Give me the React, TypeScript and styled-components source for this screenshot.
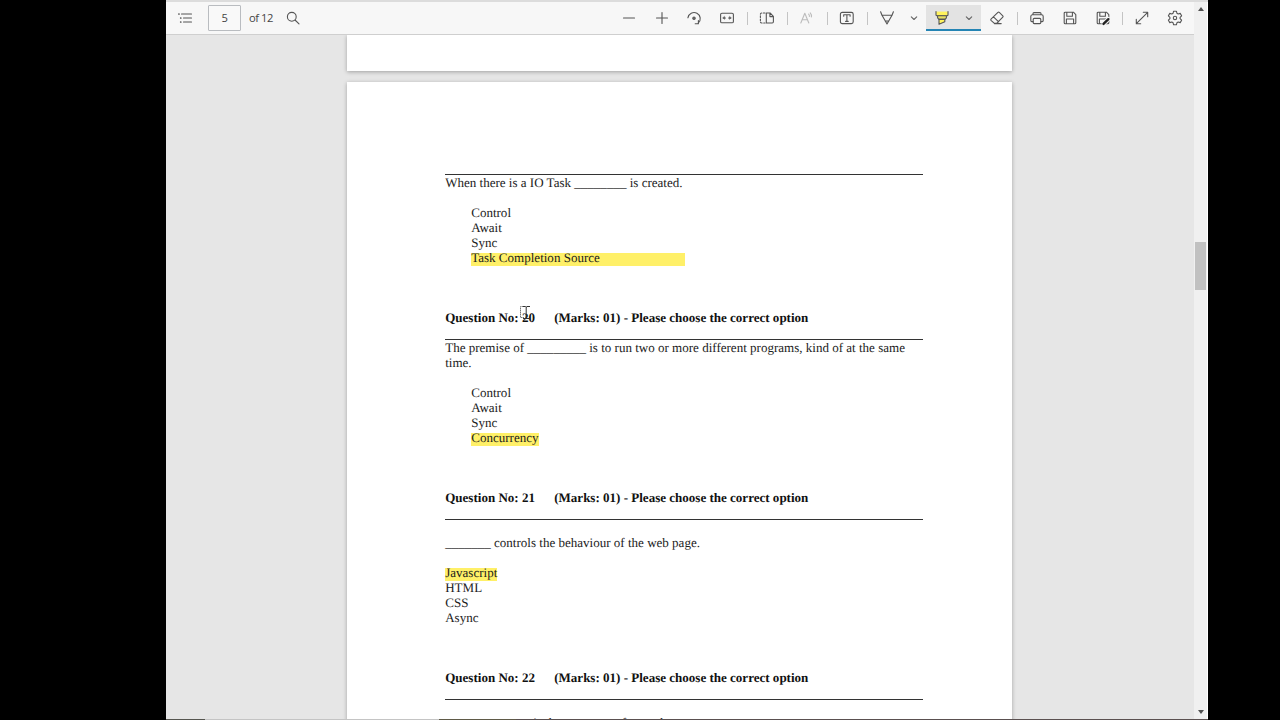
import React from 'react';
import styled, { createGlobalStyle } from 'styled-components';

const Global = createGlobalStyle`
  html, body { margin: 0; background: #000; }
  * { box-sizing: border-box; }
`;

const Screen = styled.div`
  width: 1280px;
  height: 720px;
  padding: 0 72px 0 166px;
  background: #000;
  overflow: hidden;
`;

const Viewer = styled.div`
  position: relative;
  display: flex;
  height: 720px;
  border-top: 2px solid #dcdcdc;
  background: #e6e6e6;
`;

const Main = styled.div`
  display: flex;
  flex-direction: column;
  width: 1028px;
`;

const Toolbar = styled.div`
  display: flex;
  align-items: center;
  flex: none;
  height: 33px;
  border-bottom: 1px solid #cfcfcf;
  background: #f7f7f7;
  font: 11.2px 'Open Sans', 'Noto Sans', sans-serif;
  letter-spacing: -0.6px;
  word-spacing: 0.5px;
  color: #444;
`;

const Slot = styled.div<{ $w: number }>`
  display: flex;
  align-items: center;
  justify-content: center;
  flex: none;
  width: ${(p) => p.$w}px;
  height: 26px;
`;

const PageInput = styled.div`
  display: flex;
  align-items: center;
  justify-content: center;
  width: 33px;
  height: 26px;
  margin-left: 4px;
  padding-bottom: 1px;
  border: 1px solid #b9bcc0;
  border-radius: 1px;
  background: #f9f9f9;
`;

const PageCount = styled.div`
  width: 28px;
  margin-left: 8px;
  padding-bottom: 1px;
  white-space: nowrap;
`;

const Tools = styled.div`
  display: flex;
  align-items: center;
  margin: 0 3px 0 auto;
`;

const Separator = styled.div`
  width: 1px;
  height: 13px;
  margin: 0 2px 0 3px;
  background: #c4c4c4;
`;

const ActiveTool = styled.div`
  display: flex;
  width: 55px;
  height: 26px;
  margin-left: 1px;
  margin-right: -1px;
  background: #e3e3e3;
  box-shadow: inset 0 -2px #2484b4;
`;

const Glyph = styled.svg`
  display: block;
  width: 16px;
  height: 16px;
  fill: none;
  stroke: #555;
  stroke-width: 1.1;
  stroke-linecap: round;
  stroke-linejoin: round;
  overflow: visible;
`;

const Canvas = styled.div`
  flex: 1;
  min-height: 0;
  padding-left: 181px;
  overflow: hidden;
`;

const Sheet = styled.div`
  width: 665px;
  background: #fff;
  box-shadow: 0 1px 4px rgba(0, 0, 0, 0.3);
`;

const PreviousSheet = styled(Sheet)`
  height: 36px;
  margin-bottom: 11px;
`;

const CurrentSheet = styled(Sheet)`
  height: 800px;
  padding: 78px 0 0 98.2px;
  font: 13.04px/15px 'Liberation Serif', 'Times New Roman', serif;
  color: #1c1c1c;
  text-rendering: geometricPrecision;
  white-space: pre;
`;

const Line = styled.div<{ $indent?: boolean }>`
  width: 478px;
  height: 15px;
  padding-left: ${(p) => (p.$indent ? 26 : 0)}px;
`;

const Heading = styled(Line)`
  display: flex;
  font-weight: bold;
  color: #111;
`;

const Number = styled.span`
  width: 109px;
`;

const Rule = styled.div`
  width: 478px;
  height: 15px;
  border-bottom: 1px solid #333;
`;

const Mark = styled.span<{ $w: number }>`
  display: block;
  width: ${(p) => p.$w}px;
  height: 16px;
  background: linear-gradient(transparent 3px, #fff068 3px);
`;

const Scrollbar = styled.div`
  display: flex;
  flex-direction: column;
  align-items: center;
  width: 14px;
  padding-top: 5px;
  border-right: 1px solid #fff;
  background: #f0f0f0;
`;

const Thumb = styled.div`
  width: 11px;
  height: 48px;
  margin: 231px 0 auto;
  background: #c1c1c1;
`;

const Arrow = styled.svg`
  width: 6px;
  height: 4px;
  fill: #505050;
`;

const ScreenEdge = styled.div`
  position: absolute;
  left: 0;
  right: 0;
  bottom: 0;
  height: 1px;
  background: linear-gradient(90deg, #55554f 39px, #c4c4c4 39px 273px, #5f5a48 273px 350px, #5a5050 350px);
`;

const Pointer = styled.svg`
  position: absolute;
  left: 353px;
  top: 303px;
  width: 12px;
  height: 15px;
  fill: none;
  stroke: #333;
  stroke-width: 1;
`;

const Icon = ({ children, color }: { children: React.ReactNode; color?: string }) => (
  <Glyph viewBox="0 0 16 16" style={color ? { stroke: color } : undefined}>{children}</Glyph>
);

const Chevron = () => (
  <Icon color="#666"><path d="M5.3 6.8 8 9.5l2.7-2.7" /></Icon>
);

const floppy = 'M2.2 3.2a1 1 0 0 1 1-1h8.2l2.4 2.4v8.2a1 1 0 0 1-1 1H3.2a1 1 0 0 1-1-1zM4.8 2.4v3.8h5.6V2.4M4.4 13.6V9h7.2v4.6';

const Options = ({ items }: { items: string[] }) => (
  <>{items.map((t) => <Line key={t} $indent>{t}</Line>)}</>
);

const Question = ({ n }: { n: number }) => (
  <>
    <Heading><Number>Question No: {n}</Number>(Marks: 01) - Please choose the correct option</Heading>
    <Rule />
  </>
);

export default function App() {
  return (
    <Screen>
      <Global />
      <Viewer>
        <Main>
          <Toolbar>
            <Slot $w={38}>
              <Icon>
                <path d="M4.5 4H14.5M6.5 8H14.5M6.5 12H14.5" />
                <path d="M1.9 4h.1M3.7 8h.1M3.7 12h.1" strokeWidth="1.7" />
              </Icon>
            </Slot>
            <PageInput>5</PageInput>
            <PageCount>of 12</PageCount>
            <Slot $w={32}><Icon><circle cx="6.8" cy="6.8" r="4.4" /><path d="m10 10 4 3.8" /></Icon></Slot>
            <Tools>
              <Slot $w={32}><Icon><path d="M2.5 8h11" /></Icon></Slot>
              <Slot $w={33}><Icon><path d="M2.5 8h11M8 2.5v11" /></Icon></Slot>
              <Slot $w={32}>
                <Icon>
                  <path d="M1.9 7.8A6.2 6.1 0 1 1 12.2 13.2M9.2 13.7h3.2v-3.2" />
                  <circle cx="8" cy="8.2" r="1.2" fill="#777" />
                </Icon>
              </Slot>
              <Slot $w={34}>
                <Icon>
                  <rect x="1.6" y="3.2" width="12.8" height="9.6" rx="1.4" />
                  <path d="M4.2 8h2.2M9.6 8h2.2" />
                  <path d="M5.6 6.6v2.8L4 8zM10.4 6.6v2.8L12 8z" fill="#555" strokeWidth=".4" />
                </Icon>
              </Slot>
              <Separator />
              <Slot $w={34}>
                <Icon>
                  <path d="M6 3H2.6a1.2 1.2 0 0 0-1.2 1.2v7.6A1.2 1.2 0 0 0 2.6 13H6" strokeDasharray="1.7 1.6" />
                  <path d="M7.3 3h3.8l3.3 3.3v5.5a1.2 1.2 0 0 1-1.2 1.2H7.3zM10.9 3.2v3.4h3.4" />
                </Icon>
              </Slot>
              <Separator />
              <Slot $w={34}>
                <Icon color="#bcbcbc">
                  <path d="M1.8 13 5.8 3.2 9.8 13M3.2 9.7h5.2M9.6 4.2c.7.6.9 1.5.8 2.3M11.2 2.8c1.1 1.1 1.5 2.6 1.2 4.2" />
                </Icon>
              </Slot>
              <Separator />
              <Slot $w={34}>
                <Icon>
                  <rect x="1.4" y="2.4" width="12.8" height="11.2" rx="1.8" />
                  <path d="M4.7 6.2V4.8h6.4v1.4M7.9 4.8v6.5M6.6 11.4h2.6" />
                </Icon>
              </Slot>
              <Separator />
              <Slot $w={33}>
                <Icon><path d="M1.6 1.8 3 5.2 8 14l5-8.8 1.4-3.4M2.9 5.2h10.2M6.2 11h3.6" /></Icon>
              </Slot>
              <Slot $w={22}><Chevron /></Slot>
              <ActiveTool>
                <Slot $w={32}>
                  <Icon>
                    <path d="M2.2 1.6h11.6v4.2H2.2z" fill="#fff35c" stroke="none" />
                    <path d="M2 1.6v3.2a1 1 0 0 0 1 1h10a1 1 0 0 0 1-1V1.6" />
                    <path d="M3.6 5.8v2l1.4 1.6h6l1.4-1.6v-2z" fill="#e6de60" />
                    <path d="M5 9.4v4.9l5.8-2.6V9.4z" fill="#fff35c" />
                  </Icon>
                </Slot>
                <Slot $w={22}><Chevron /></Slot>
              </ActiveTool>
              <Slot $w={34}>
                <Icon>
                  <path d="M2 9.2 8.9 2.4a1 1 0 0 1 1.4 0l3.5 3.4a1 1 0 0 1 0 1.4L7.6 13.4H5.4L2 10.3a.8.8 0 0 1 0-1.1zM4.5 6.9l5.2 5M5.4 13.6h6.8" />
                </Icon>
              </Slot>
              <Separator />
              <Slot $w={34}>
                <Icon>
                  <path d="M4 4.8V3.6a1 1 0 0 1 1-1h6a1 1 0 0 1 1 1v1.2M4 11.6H2.8a1 1 0 0 1-1-1V6.4a1.6 1.6 0 0 1 1.6-1.6h9.2a1.6 1.6 0 0 1 1.6 1.6v4.2a1 1 0 0 1-1 1H12" />
                  <rect x="4.2" y="8.4" width="7.6" height="5.2" rx="1" />
                </Icon>
              </Slot>
              <Slot $w={32}><Icon><path d={floppy} /></Icon></Slot>
              <Slot $w={33}>
                <Icon>
                  <path d={floppy} />
                  <path d="m8.7 13.8 4.8-4.7" stroke="#f7f7f7" strokeWidth="4.2" />
                  <path d="m8.5 13.9 4.9-4.7" stroke="#222" strokeWidth="2.4" />
                </Icon>
              </Slot>
              <Separator />
              <Slot $w={34}>
                <Icon><path d="M2.3 13.7 13.7 2.3M9.3 2.3h4.4v4.4M2.3 9.3v4.4h4.4" /></Icon>
              </Slot>
              <Slot $w={32}>
                <Icon>
                  <path d="M6.6 1.2h2.8l.5 2 1.3.8 2-.6 1.4 2.4-1.5 1.5v1.4l1.5 1.5-1.4 2.4-2-.6-1.3.8-.5 2H6.6l-.5-2-1.3-.8-2 .6-1.4-2.4 1.5-1.5V7.3L1.4 5.8l1.4-2.4 2 .6 1.3-.8z" />
                  <circle cx="8" cy="8" r="1.7" />
                </Icon>
              </Slot>
            </Tools>
          </Toolbar>
          <Canvas>
            <PreviousSheet />
            <CurrentSheet>
              <Rule />
              <Line>When there is a IO Task ________ is created.</Line>
              <Line />
              <Options items={['Control', 'Await', 'Sync']} />
              <Line $indent><Mark $w={214}>Task Completion Source</Mark></Line>
              <Line /><Line /><Line />
              <Question n={20} />
              <Line>The premise of _________ is to run two or more different programs, kind of at the same</Line>
              <Line>time.</Line>
              <Line />
              <Options items={['Control', 'Await', 'Sync']} />
              <Line $indent><Mark $w={68}>Concurrency</Mark></Line>
              <Line /><Line /><Line />
              <Question n={21} />
              <Line />
              <Line>_______ controls the behaviour of the web page.</Line>
              <Line />
              <Line><Mark $w={52}>Javascript</Mark></Line>
              <Line>HTML</Line>
              <Line>CSS</Line>
              <Line>Async</Line>
              <Line /><Line /><Line />
              <Question n={22} />
              <Line />
              <Line>_____________ is the sequence of some browser</Line>
            </CurrentSheet>
          </Canvas>
        </Main>
        <Scrollbar>
          <Arrow viewBox="0 0 6 4"><path d="M0 4 3 0l3 4z" /></Arrow>
          <Thumb />
          <Arrow viewBox="0 0 6 4" style={{ marginBottom: 6 }}><path d="M0 0h6L3 4z" /></Arrow>
        </Scrollbar>
        <Pointer viewBox="0 0 12 15">
          <path d="M1.5 12V1.5h3" stroke="#777" strokeDasharray="1.5 .5" />
          <path d="M1.5 12.5h4" stroke="#777" strokeDasharray="1.5 .5" />
          <path d="M4 1.5h2.5l.7.6.7-.6H11M7.2 2v11M4 13.5h6.5" />
        </Pointer>
        <ScreenEdge />
      </Viewer>
    </Screen>
  );
}
